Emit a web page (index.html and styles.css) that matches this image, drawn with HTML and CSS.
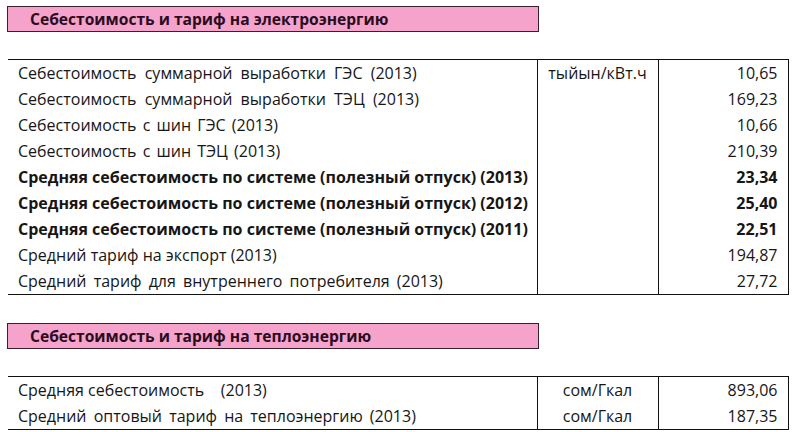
FILE: index.html
```html
<!DOCTYPE html>
<html lang="ru">
<head>
<meta charset="utf-8">
<link rel="stylesheet" href="styles.css">
</head>
<body>
<div class="page">
  <div class="title">Себестоимость и тариф на электроэнергию</div>
  <table class="data">
    <colgroup><col class="c1"><col class="c2"><col class="c3"></colgroup>
    <tr><td class="name ws4">Себестоимость суммарной выработки ГЭС (2013)</td><td class="unit">тыйын/кВт.ч</td><td class="val">10,65</td></tr>
    <tr><td class="name ws4">Себестоимость суммарной выработки ТЭЦ (2013)</td><td class="unit"></td><td class="val">169,23</td></tr>
    <tr><td class="name ws2">Себестоимость с шин ГЭС (2013)</td><td class="unit"></td><td class="val">10,66</td></tr>
    <tr><td class="name ws2">Себестоимость с шин ТЭЦ (2013)</td><td class="unit"></td><td class="val">210,39</td></tr>
    <tr class="bold"><td class="name">Средняя себестоимость по системе (полезный отпуск) (2013)</td><td class="unit"></td><td class="val">23,34</td></tr>
    <tr class="bold"><td class="name">Средняя себестоимость по системе (полезный отпуск) (2012)</td><td class="unit"></td><td class="val">25,40</td></tr>
    <tr class="bold"><td class="name">Средняя себестоимость по системе (полезный отпуск) (2011)</td><td class="unit"></td><td class="val">22,51</td></tr>
    <tr><td class="name">Средний тариф на экспорт (2013)</td><td class="unit"></td><td class="val">194,87</td></tr>
    <tr><td class="name ws3">Средний тариф для внутреннего потребителя (2013)</td><td class="unit"></td><td class="val">27,72</td></tr>
  </table>
  <div class="title second">Себестоимость и тариф на теплоэнергию</div>
  <table class="data">
    <colgroup><col class="c1"><col class="c2"><col class="c3"></colgroup>
    <tr><td class="name">Средняя себестоимость&nbsp;&nbsp;&nbsp;&nbsp;(2013)</td><td class="unit">сом/Гкал</td><td class="val">893,06</td></tr>
    <tr><td class="name ws3">Средний оптовый тариф на теплоэнергию (2013)</td><td class="unit">сом/Гкал</td><td class="val">187,35</td></tr>
  </table>
</div>
</body>
</html>
```
FILE: styles.css
```css
html, body {
  margin: 0;
  padding: 0;
  background: #ffffff;
}
.page {
  padding: 6px 0 0 7px;
  font-family: "Open Sans", "Liberation Sans", sans-serif;
  color: #161616;
}
.title {
  box-sizing: border-box;
  width: 532px;
  height: 26px;
  background: #f5a3cb;
  border: 1px solid #3a1f2c;
  padding-left: 22px;
  font-weight: bold;
  font-size: 15.6px;
  line-height: 24px;
  color: #2a0c1e;
}
.title.second {
  margin-top: 28px;
}
.data {
  margin: 27px 0 0 1px;
  border-collapse: collapse;
  width: 780px;
  table-layout: fixed;
  font-size: 16px;
  border-top: 1px solid #111;
  border-bottom: 1px solid #111;
}
.c1 { width: 529px; }
.c2 { width: 121px; }
.c3 { width: 130px; }
.data td {
  height: 26px;
  padding: 0;
  line-height: 26px;
  white-space: nowrap;
  box-sizing: border-box;
}
.data td.name {
  padding-left: 10px;
}
.data td.ws2 { word-spacing: 2px; }
.data td.ws3 { word-spacing: 3px; }
.data td.ws4 { word-spacing: 4px; }
.data td.unit {
  border-left: 1px solid #111;
  text-align: center;
}
.data td.val {
  border-left: 1px solid #111;
  border-right: 1px solid #111;
  text-align: right;
  padding-right: 10px;
}
.bold td {
  font-weight: bold;
}
```
